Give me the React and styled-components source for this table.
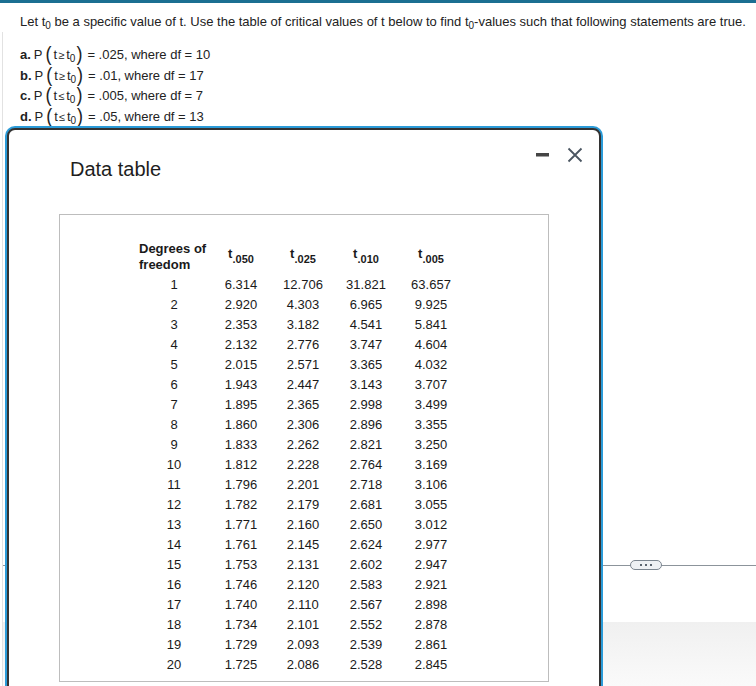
import React from 'react';
import styled, { createGlobalStyle } from 'styled-components';

const GlobalStyle = createGlobalStyle`
  html, body {
    margin: 0;
    padding: 0;
    background: #fff;
    overflow: hidden;
  }
  body {
    font-family: 'Liberation Sans', Arial, sans-serif;
    color: #222;
  }
  *, *::before, *::after {
    box-sizing: border-box;
  }
`;

const Page = styled.div`
  position: relative;
  width: 756px;
  height: 686px;
  overflow: hidden;
  display: flex;
  flex-direction: column;
`;

const TopBar = styled.div`
  height: 3px;
  background: #1b6f92;
  flex: none;
`;

const Question = styled.div`
  padding: 10px 0 0 20px;
  font-size: 13px;
  line-height: 18px;
  white-space: nowrap;
`;

const Intro = styled.p`
  margin: 0 0 14px;
`;

const Sub = styled.sub`
  font-size: 10px;
  line-height: 0;
  vertical-align: -3px;
`;

const Statements = styled.div`
  display: flex;
  flex-direction: column;
`;

const Statement = styled.div`
  height: 20.5px;
  line-height: 20.5px;
`;

const Label = styled.b`
  margin-right: 3px;
`;

const Paren = styled.span`
  display: inline-block;
  font-size: 18px;
  line-height: 16px;
  vertical-align: -1px;
  transform: scaleY(1.15);
  margin: ${p => (p.$open ? '0 2px 0 3px' : '0 5px 0 1px')};
`;

const Op = styled.span`
  font-size: 11px;
  margin: 0 2px 0 1px;
`;

const Body = styled.div`
  flex: 1;
  display: flex;
  flex-direction: column;
  border-left: 1px solid #e2e2e2;
  margin-left: 2px;
  margin-top: -95px;
`;

const Spacer = styled.div`
  flex: 1;
`;

const Divider = styled.div`
  position: relative;
  height: 1px;
  background: #8c949b;
  margin-bottom: 56px;
`;

const MorePill = styled.div`
  position: absolute;
  left: 627px;
  top: -5px;
  width: 32px;
  height: 10px;
  border: 1px solid #7c8690;
  border-radius: 5px;
  background: #eef1f4;
  display: flex;
  align-items: center;
  justify-content: center;
  gap: 3px;
`;

const Dot = styled.span`
  width: 2px;
  height: 2px;
  background: #5c6670;
`;

const Footer = styled.div`
  height: 64px;
  background: linear-gradient(#f0f0f0, #fafafa);
`;

const Dialog = styled.div`
  position: absolute;
  left: 7px;
  top: 128px;
  width: 594px;
  height: 600px;
  background: #fff;
  border: 2px solid #333;
  border-radius: 8px;
  box-shadow: 0 0 0 2px #2b9bd8;
  display: flex;
  flex-direction: column;
`;

const DialogHeader = styled.div`
  display: flex;
  align-items: flex-start;
  justify-content: space-between;
  padding: 17px 16px 0 61px;
  height: 84px;
`;

const Title = styled.h2`
  margin: 10px 0 0;
  font-size: 20px;
  font-weight: normal;
  line-height: 24px;
  color: #1e1e1e;
`;

const Controls = styled.div`
  display: flex;
  align-items: center;
  gap: 16px;
`;

const IconButton = styled.button`
  border: none;
  background: none;
  padding: 0;
  width: 16px;
  height: 16px;
  display: flex;
  align-items: center;
  justify-content: center;
  cursor: pointer;
`;

const TableBox = styled.div`
  margin-left: 50px;
  width: 490px;
  border: 1px solid #bdbdbd;
  padding: 24px 0 6px 79px;
`;

const Grid = styled.div`
  display: grid;
  grid-template-columns: 70px 64px 60px 66px 64px;
  font-size: 13px;
  color: #1a1a1a;
`;

const HeadCell = styled.div`
  height: 35px;
  font-weight: bold;
  display: flex;
  align-items: center;
  justify-content: ${p => (p.$left ? 'flex-start' : 'center')};
  line-height: 16px;
`;

const THead = styled.span`
  font-weight: bold;
  font-size: 13px;
  position: relative;
  top: -3px;
`;

const TSub = styled.span`
  font-size: 11px;
  position: relative;
  top: 5px;
`;

const Cell = styled.div`
  height: 20.05px;
  display: flex;
  align-items: center;
  justify-content: center;
`;

const rows = [
  [1, '6.314', '12.706', '31.821', '63.657'],
  [2, '2.920', '4.303', '6.965', '9.925'],
  [3, '2.353', '3.182', '4.541', '5.841'],
  [4, '2.132', '2.776', '3.747', '4.604'],
  [5, '2.015', '2.571', '3.365', '4.032'],
  [6, '1.943', '2.447', '3.143', '3.707'],
  [7, '1.895', '2.365', '2.998', '3.499'],
  [8, '1.860', '2.306', '2.896', '3.355'],
  [9, '1.833', '2.262', '2.821', '3.250'],
  [10, '1.812', '2.228', '2.764', '3.169'],
  [11, '1.796', '2.201', '2.718', '3.106'],
  [12, '1.782', '2.179', '2.681', '3.055'],
  [13, '1.771', '2.160', '2.650', '3.012'],
  [14, '1.761', '2.145', '2.624', '2.977'],
  [15, '1.753', '2.131', '2.602', '2.947'],
  [16, '1.746', '2.120', '2.583', '2.921'],
  [17, '1.740', '2.110', '2.567', '2.898'],
  [18, '1.734', '2.101', '2.552', '2.878'],
  [19, '1.729', '2.093', '2.539', '2.861'],
  [20, '1.725', '2.086', '2.528', '2.845'],
];

const statements = [
  ['a.', '≥', '.025', '10'],
  ['b.', '≥', '.01', '17'],
  ['c.', '≤', '.005', '7'],
  ['d.', '≤', '.05', '13'],
];

const App = () => {
  return (
    <Page>
      <GlobalStyle />
      <TopBar />
      <Question>
        <Intro>
          Let t<Sub>0</Sub> be a specific value of t. Use the table of critical values of t below to find t
          <Sub>0</Sub>-values such that following statements are true.
        </Intro>
        <Statements>
          {statements.map(([label, op, p, df]) => (
            <Statement key={label}>
              <Label>{label}</Label>P<Paren $open>(</Paren>t<Op>{op}</Op>t<Sub>0</Sub>
              <Paren>)</Paren>= {p}, where df = {df}
            </Statement>
          ))}
        </Statements>
      </Question>
      <Body>
        <Spacer />
        <Divider>
          <MorePill>
            <Dot />
            <Dot />
            <Dot />
          </MorePill>
        </Divider>
        <Footer />
      </Body>

      <Dialog>
        <DialogHeader>
          <Title>Data table</Title>
          <Controls>
            <IconButton aria-label="Minimize">
              <svg width="14" height="4" viewBox="0 0 14 4">
                <rect x="0" y="0" width="13" height="3.5" fill="#454545" />
              </svg>
            </IconButton>
            <IconButton aria-label="Close">
              <svg width="16" height="16" viewBox="0 0 16 16">
                <path d="M1.5 1.5 L14.5 14.5 M14.5 1.5 L1.5 14.5" stroke="#4a5561" strokeWidth="1.8" fill="none" />
              </svg>
            </IconButton>
          </Controls>
        </DialogHeader>
        <TableBox>
          <Grid>
            <HeadCell $left>
              Degrees of
              <br />
              freedom
            </HeadCell>
            {['.050', '.025', '.010', '.005'].map(s => (
              <HeadCell key={s}>
                <THead>
                  t<TSub>{s}</TSub>
                </THead>
              </HeadCell>
            ))}
            {rows.map(r =>
              r.map((v, i) => <Cell key={`${r[0]}-${i}`}>{v}</Cell>)
            )}
          </Grid>
        </TableBox>
      </Dialog>
    </Page>
  );
};

export default App;
